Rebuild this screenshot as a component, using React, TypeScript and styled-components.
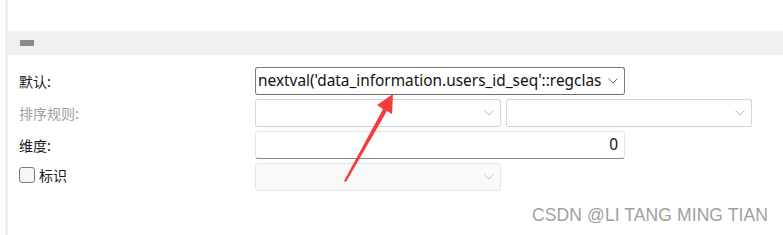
import React from "react";
import styled, { createGlobalStyle } from "styled-components";

const Global = createGlobalStyle`
  html, body { margin: 0; padding: 0; background: #ffffff; }
  body { font-family: "Noto Sans", "Noto Sans CJK SC", sans-serif; }
  * { box-sizing: border-box; }
`;

const Page = styled.div`
  position: relative;
  width: 783px;
  height: 235px;
  overflow: hidden;
  background: #ffffff;
  padding-left: 5px;
`;

const Panel = styled.div`
  height: 100%;
  border-left: 3px solid #f0f0f0;
  display: flex;
  flex-direction: column;
`;

const TopSpace = styled.div`
  height: 31px;
`;

const Band = styled.div`
  height: 24px;
  background: #f0f0f0;
  display: flex;
  align-items: center;
  padding-left: 12px;
  margin-left: -3px;
`;

const Handle = styled.div`
  width: 14px;
  height: 6px;
  background: #8a8a8a;
  margin-left: 3px;
`;

const Form = styled.div`
  display: grid;
  grid-template-columns: 236px 1fr;
  row-gap: 4px;
  padding: 12px 0 0 11px;
  align-items: center;
`;

const Label = styled.div<{ $muted?: boolean; $raise?: number }>`
  font-family: "Noto Sans CJK SC", sans-serif;
  font-size: 14px;
  color: ${(p) => (p.$muted ? "#a0a0a0" : "#1a1a1a")};
  display: flex;
  align-items: center;
  gap: 4px;
  height: 28px;
  margin-top: ${(p) => (p.$raise ? -p.$raise * 2 : 0)}px;
`;

const Box = styled.span`
  width: 16px;
  height: 16px;
  border: 1px solid #7a7a7a;
  border-radius: 3px;
  background: #f6f6f6;
  display: inline-block;
`;

const Fields = styled.div`
  display: flex;
  gap: 5px;
`;

const Field = styled.div<{ $w: number; $tone: "dark" | "light" | "text" | "disabled" }>`
  width: ${(p) => p.$w}px;
  height: 28px;
  border-radius: 3px;
  border: 1px solid
    ${(p) => (p.$tone === "dark" ? "#7a7a7a" : p.$tone === "text" ? "#e3e3e3" : "#d6d6d6")};
  border-bottom-color: ${(p) =>
    p.$tone === "dark" ? "#6e6e6e" : p.$tone === "text" ? "#8a8a8a" : p.$tone === "disabled" ? "#e2e2e2" : "#d0d0d0"};
  ${(p) => (p.$tone === "disabled" ? "border-color: #e6e6e6;" : "")}
  background: ${(p) => (p.$tone === "disabled" ? "#f9f9f9" : "#ffffff")};
  display: flex;
  align-items: center;
  padding: 0 6px 0 2px;
  gap: 6px;
  overflow: hidden;
`;

const Value = styled.span<{ $right?: boolean }>`
  flex: 1;
  min-width: 0;
  white-space: nowrap;
  overflow: hidden;
  font-family: "Noto Sans", sans-serif;
  font-size: 15.4px;
  color: #111;
  text-align: ${(p) => (p.$right ? "right" : "left")};
  line-height: 26px;
`;

const Chevron = ({ color }: { color: string }) => (
  <svg width="10" height="6" viewBox="0 0 10 6" style={{ flex: "none" }}>
    <path d="M0.5 0.5 L5 5 L9.5 0.5" fill="none" stroke={color} strokeWidth="1" />
  </svg>
);

const Watermark = styled.div`
  position: absolute;
  right: 15px;
  bottom: 9px;
  font-family: "Liberation Sans", Arial, sans-serif;
  font-size: 17.5px;
  color: #a0a0a0;
  letter-spacing: 0.1px;
`;

const Arrow = styled.svg`
  position: absolute;
  left: 0;
  top: 0;
  pointer-events: none;
`;

export default function App() {
  return (
    <>
      <Global />
      <Page>
        <Panel>
          <TopSpace />
          <Band>
            <Handle />
          </Band>
          <Form>
            <Label>默认:</Label>
            <Fields>
              <Field $w={370} $tone="dark">
                <Value>nextval('data_information.users_id_seq'::regclass)</Value>
                <Chevron color="#6a6a6a" />
              </Field>
            </Fields>

            <Label $muted>排序规则:</Label>
            <Fields>
              <Field $w={246} $tone="light">
                <Value />
                <Chevron color="#b8b8b8" />
              </Field>
              <Field $w={246} $tone="light">
                <Value />
                <Chevron color="#b8b8b8" />
              </Field>
            </Fields>

            <Label>维度:</Label>
            <Fields>
              <Field $w={370} $tone="text">
                <Value $right>0</Value>
              </Field>
            </Fields>

            <Label $raise={2}>
              <Box />
              标识
            </Label>
            <Fields>
              <Field $w={246} $tone="disabled">
                <Value />
                <Chevron color="#c4c4c4" />
              </Field>
            </Fields>
          </Form>
        </Panel>
        <Watermark>CSDN @LI TANG MING TIAN</Watermark>
        <Arrow width="783" height="235" viewBox="0 0 783 235">
          <polygon
            points="344,181 383,109 377,105 393,94 392,114 387,111 346,182"
            fill="#f53c3c"
          />
        </Arrow>
      </Page>
    </>
  );
}
